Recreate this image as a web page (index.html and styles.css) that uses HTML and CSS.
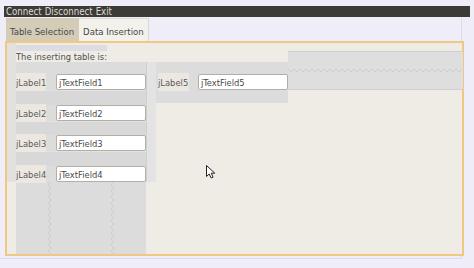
FILE: index.html
```html
<!DOCTYPE html>
<html>
    <head>
        <meta charset="utf-8">
        <title>Data Insertion</title>
        <link rel="stylesheet" href="styles.css">
    </head>
    <body>
        <div class="window">
            <div class="menubar">
                <span>Connect</span>
                <span>Disconnect</span>
                <span>Exit</span>
            </div>

            <div class="frame">
                <div class="tabs">
                    <div class="tab tab-selected">Table Selection</div>
                    <div class="tab">Data Insertion</div>
                </div>

                <div class="panel">
                    <div class="designer">
                        <!-- cell guides of the layout -->
                        <div class="strip-left"></div>
                        <div class="strip-top"></div>
                        <div class="title">The inserting table is:</div>
                        <div class="band-right">
                            <svg class="zz-h" width="174" height="4"><polyline points="0,0 3,3 6,0 9,3 12,0 15,3 18,0 21,3 24,0 27,3 30,0 33,3 36,0 39,3 42,0 45,3 48,0 51,3 54,0 57,3 60,0 63,3 66,0 69,3 72,0 75,3 78,0 81,3 84,0 87,3 90,0 93,3 96,0 99,3 102,0 105,3 108,0 111,3 114,0 117,3 120,0 123,3 126,0 129,3 132,0 135,3 138,0 141,3 144,0 147,3 150,0 153,3 156,0 159,3 162,0 165,3 168,0 171,3 174,0"/></svg>
                        </div>
                        <div class="block-main"></div>
                        <div class="gap-row gr1"></div>
                        <div class="gap-row gr2"></div>
                        <div class="gap-row gr3"></div>
                        <div class="strip-mid"></div>
                        <div class="band-mid"></div>

                        <!-- components -->
                        <div class="label r1">jLabel1</div>
                        <div class="field r1">jTextField1</div>
                        <div class="label r2">jLabel2</div>
                        <div class="field r2">jTextField2</div>
                        <div class="label r3">jLabel3</div>
                        <div class="field r3">jTextField3</div>
                        <div class="label r4">jLabel4</div>
                        <div class="field r4">jTextField4</div>
                        <div class="label label5">jLabel5</div>
                        <div class="field field5">jTextField5</div>

                        <div class="bottom-cells">
                            <svg class="zz-v" width="4" height="72"><polyline points="2,0 0,3 3,6 0,9 3,12 0,15 3,18 0,21 3,24 0,27 3,30 0,33 3,36 0,39 3,42 0,45 3,48 0,51 3,54 0,57 3,60 0,63 3,66 0,69 3,72"/></svg>
                            <svg class="zz-v" width="4" height="72"><polyline points="2,0 0,3 3,6 0,9 3,12 0,15 3,18 0,21 3,24 0,27 3,30 0,33 3,36 0,39 3,42 0,45 3,48 0,51 3,54 0,57 3,60 0,63 3,66 0,69 3,72"/></svg>
                        </div>
                    </div>
                </div>
            </div>

            <svg class="cursor" width="11" height="14" viewBox="0 0 11 14">
                <path d="M0.5 0.5 L0.5 11.5 L3.2 9 L5.2 13 L7.1 12.1 L5.2 8.2 L8.8 8.2 Z" fill="#ffffff" stroke="#222222" stroke-width="1" stroke-linejoin="miter"/>
            </svg>
        </div>
    </body>
</html>
```

FILE: styles.css
```css
body {
    margin: 0;
    width: 474px;
    height: 268px;
    overflow: hidden;
    background: #efeef8;
    font-family: 'DejaVu Sans Condensed', 'DejaVu Sans', sans-serif;
    font-size: 9.3px;
    color: #4e4e4e;
}

.window {
    position: relative;
    padding-top: 6px;
}

.menubar {
    display: flex;
    gap: 3px;
    height: 11px;
    margin: 0 4px;
    padding-left: 2px;
    background: #3c3b37;
    color: #dfdbd2;
    font-size: 9.6px;
    line-height: 11px;
}

.frame {
    width: 461px;
    height: 240px;
    margin-top: 1px;
    border-right: 1px solid #dcdaf0;
    border-bottom: 1px solid #dcdaf0;
}

.tabs {
    display: flex;
    height: 23px;
    margin-left: 6px;
}

.tab {
    display: flex;
    align-items: center;
    padding: 3px 4px 0 4px;
    font-size: 9.5px;
    color: #474747;
    white-space: nowrap;
    background: #f3f1ec;
    border: solid #dcd8cf;
    border-width: 1px 1px 0 0;
}

.tab-selected {
    background: #d5ccb8;
    border-color: #d5ccb8;
}

.panel {
    width: 455px;
    height: 211px;
    margin-left: 5px;
    border: 2px solid #f0c883;
    background: #efebe5;
}

/* grid bag cells, roughly as the form editor draws them */
.designer {
    display: grid;
    grid-template-columns: 9px 30px 10px 90px 10px 2px 31px 9px 90px 174px;
    grid-template-rows: 2px 6px 11px 12px 16px 13px 2px 16px 14px 16px 15px 16px 72px;
}

.strip-left {
    grid-column: 1 / 2;
    grid-row: 1 / 13;
    background: #e2e1df;
}

.strip-top {
    grid-column: 2 / 5;
    grid-row: 2 / 3;
    width: 91px;
    background: #dcdde2;
}

.title {
    grid-column: 2 / 6;
    grid-row: 3 / 4;
    line-height: 11px;
    white-space: nowrap;
}

.band-right {
    grid-column: 10 / 11;
    grid-row: 3 / 6;
    display: flex;
    align-items: center;
    margin-right: -1px;
    background: #dedede;
    border-top: 1px solid #cfcfcf;
    border-bottom: 1px solid #cfcfcf;
}

.zz-h polyline,
.zz-v polyline {
    fill: none;
    stroke: #cdcdcd;
    stroke-width: 1;
}

.block-main {
    grid-column: 2 / 5;
    grid-row: 4 / 14;
    background: #dcdcdc;
}

.gap-row {
    grid-column: 2 / 5;
    background: #d8d8d8;
    border-top: 1px solid #e2e2e2;
}

.gr1 { grid-row: 6 / 8; }
.gr2 { grid-row: 9 / 10; }
.gr3 { grid-row: 11 / 12; }

.strip-mid {
    grid-column: 5 / 6;
    grid-row: 4 / 13;
    background: #e3e3e3;
    border-left: 1px solid #d0d0d0;
}

.band-mid {
    grid-column: 6 / 10;
    grid-row: 4 / 7;
    background: #dcdcdc;
}

.label {
    grid-column: 2 / 3;
    display: flex;
    align-items: center;
    margin: -1px 0;
    color: #595959;
    background: #ece8e1;
    white-space: nowrap;
    overflow: hidden;
}

.field {
    grid-column: 4 / 5;
    display: flex;
    align-items: center;
    padding-left: 2px;
    color: #4a4a4a;
    background: #ffffff;
    border: 1px solid #b3afa6;
    border-radius: 2px;
    white-space: nowrap;
}

.r1 { grid-row: 5 / 6; }
.r2 { grid-row: 8 / 9; }
.r3 { grid-row: 10 / 11; }
.r4 { grid-row: 12 / 13; }

.label5 {
    grid-column: 7 / 8;
    grid-row: 5 / 6;
}

.field5 {
    grid-column: 9 / 10;
    grid-row: 5 / 6;
}

.bottom-cells {
    grid-column: 2 / 5;
    grid-row: 13 / 14;
    display: flex;
    gap: 59px;
    padding-left: 32px;
}

.cursor {
    position: absolute;
    left: 206px;
    top: 165px;
}
```
